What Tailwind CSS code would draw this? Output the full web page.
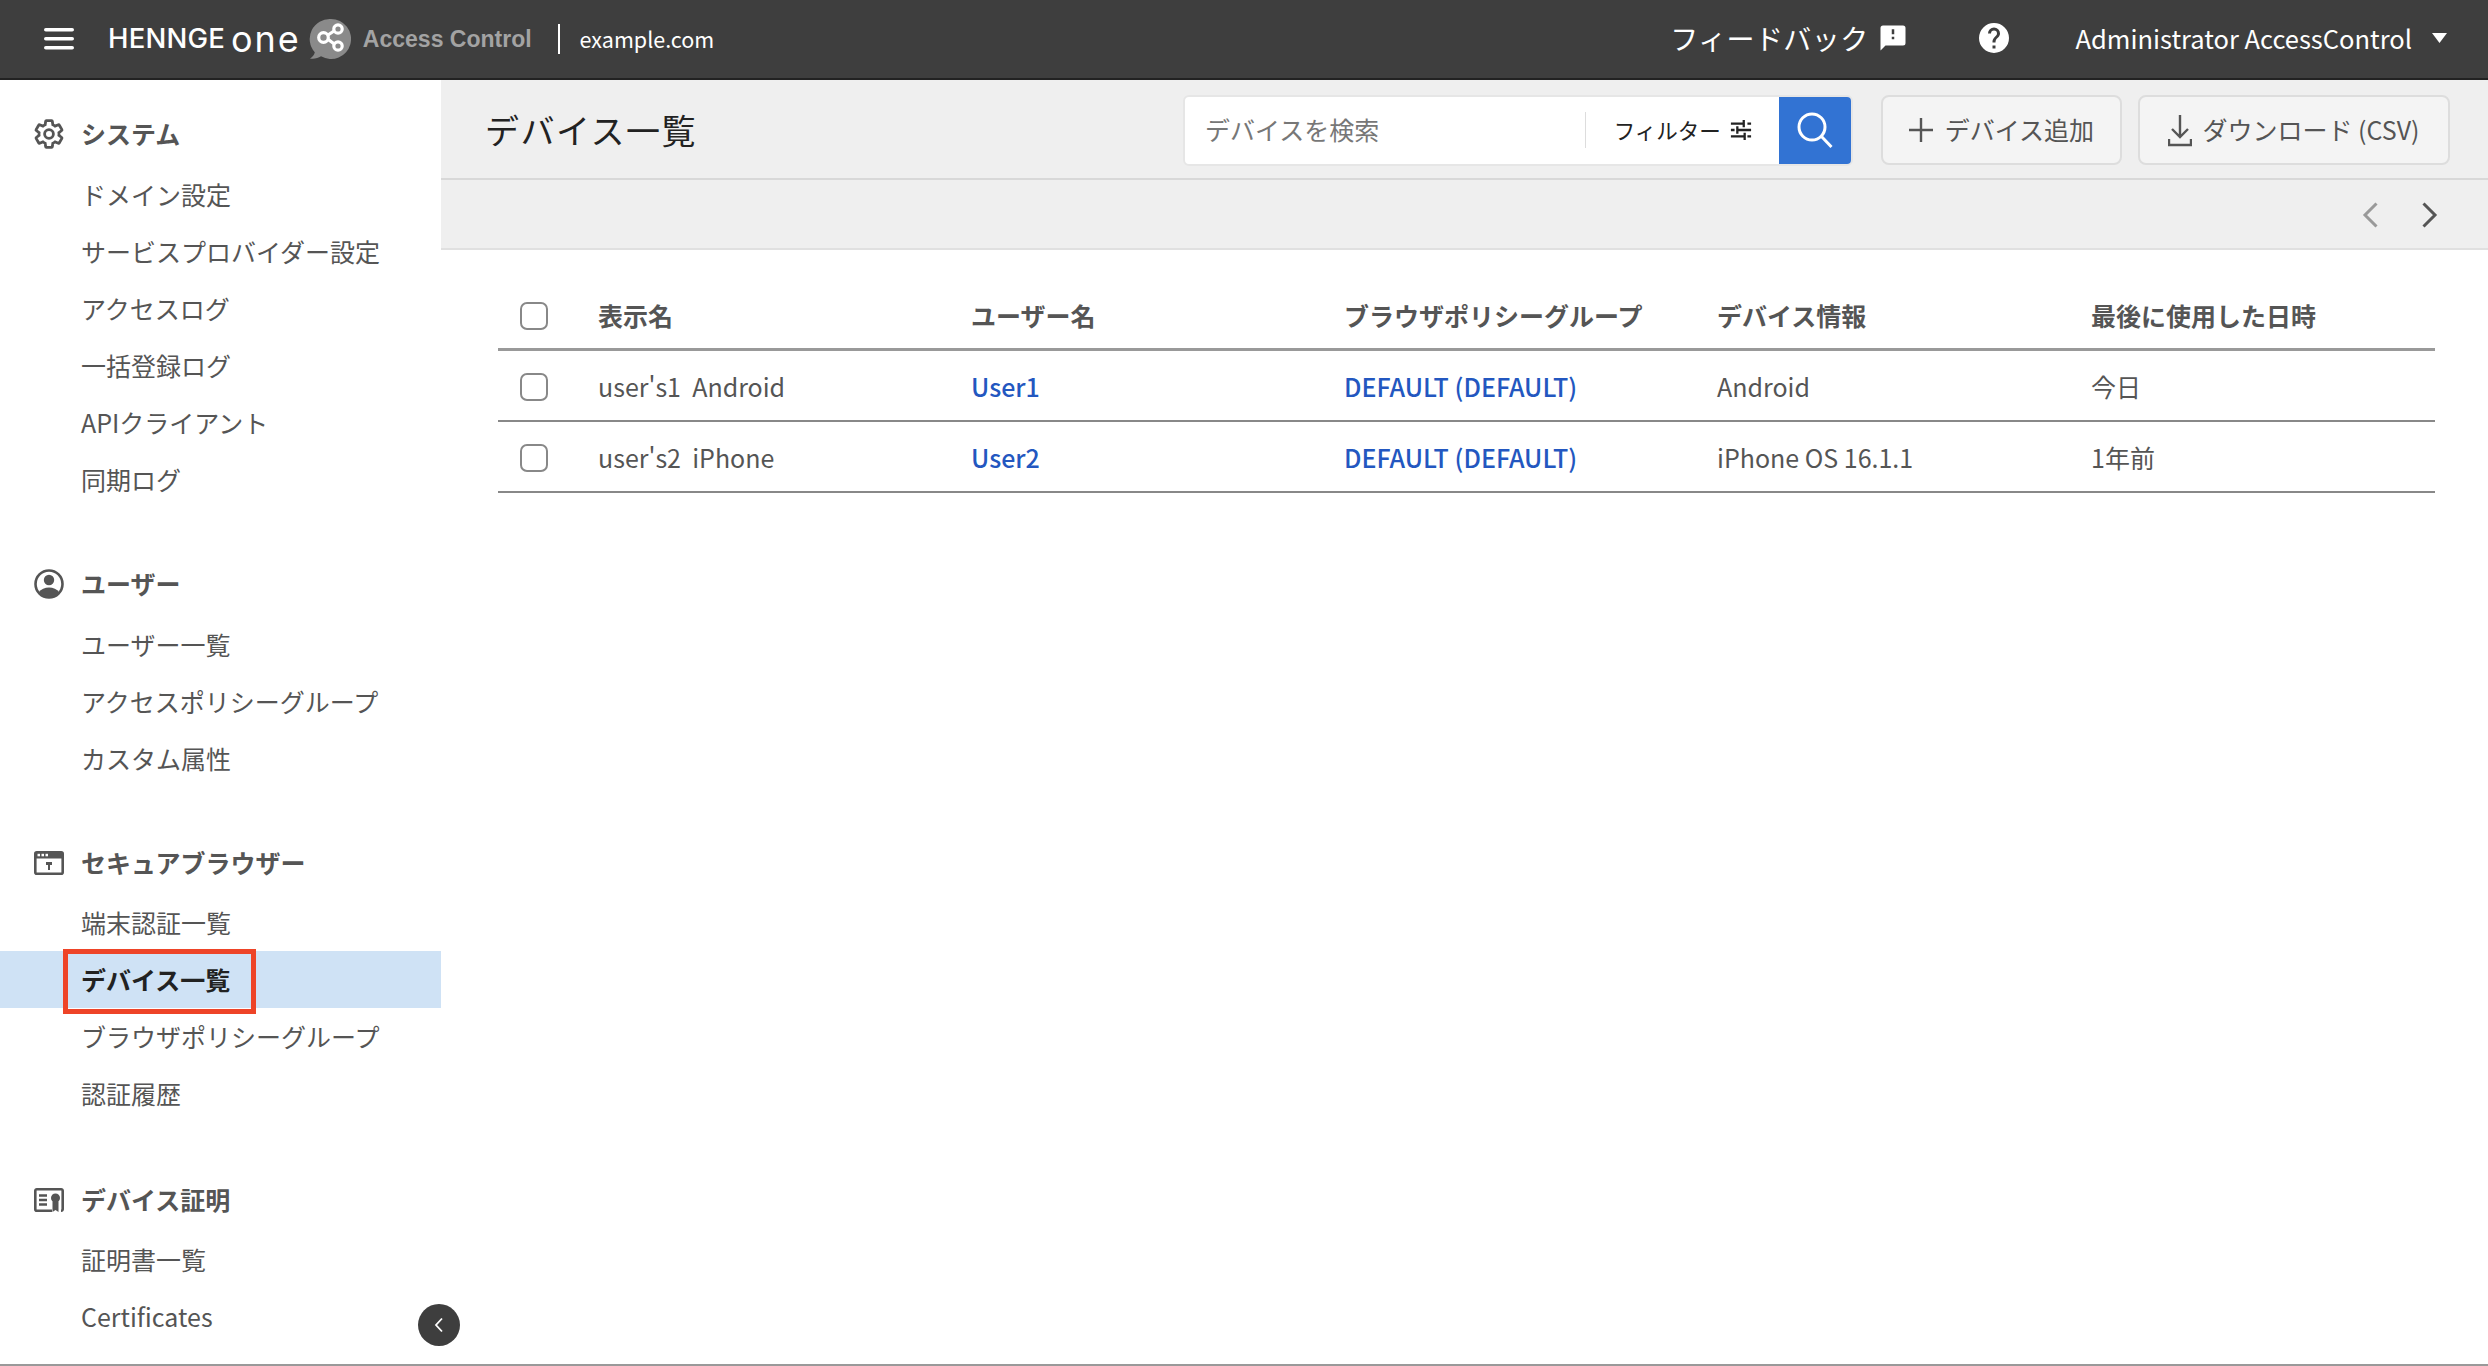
<!DOCTYPE html>
<html lang="ja">
<head>
<meta charset="utf-8">
<title>デバイス一覧</title>
<script src="https://cdn.jsdelivr.net/npm/@tailwindcss/browser@4"></script>
</head>
<body class="m-0 h-screen overflow-hidden bg-white font-['Noto_Sans_CJK_JP','Noto_Sans',sans-serif] text-[#555]">
<div class="flex h-[1366px] flex-col border-b-2 border-[#999]">
  <header class="flex h-[80px] shrink-0 items-center border-b-2 border-[#222] bg-[#3e3e3e] text-white">
    <svg class="ml-[44px] h-[24px] w-[30px]" viewBox="0 0 30 24" fill="#fff"><rect y="1" width="30" height="3.6" rx="1.8"/><rect y="10" width="30" height="3.6" rx="1.8"/><rect y="19" width="30" height="3.6" rx="1.8"/></svg>
    <div class="ml-[34px] flex items-center">
      <span class="font-['Inter',sans-serif] text-[27.5px] font-medium leading-none tracking-[0.2px]">HENNGE</span>
      <span class="ml-[6px] font-['Inter',sans-serif] text-[36px] font-normal leading-none tracking-[2px]">one</span>
      <svg class="ml-[6px] h-[44px] w-[44px]" viewBox="0 0 44 44">
        <path fill="#8a8a8a" d="M24 2a20 20 0 1 1-10 37.3c-3 2-7 2.9-11 2.2 2.600-1.500 4.200-3.500 4.800-6.200A20 20 0 0 1 24 2z"/>
        <g fill="none" stroke="#fff" stroke-width="3.200"><path d="M30 12 18 20l12 9"/><circle cx="31" cy="12" r="4.200" fill="#8a8a8a"/><circle cx="16.500" cy="20.500" r="4.800" fill="#8a8a8a"/><circle cx="31" cy="29" r="4.200" fill="#8a8a8a"/></g>
      </svg>
      <span class="ml-[12px] font-['Liberation_Sans',sans-serif] text-[23px] font-bold leading-none text-[#a3a3a3]">Access Control</span>
      <span class="ml-[26px] h-[30px] w-[2px] bg-white"></span>
      <span class="ml-[20px] text-[21.5px] leading-none">example.com</span>
    </div>
    <div class="ml-auto flex items-center pb-[2px]">
      <span class="text-[28px] leading-none tracking-[0.4px]">フィードバック</span>
      <svg class="ml-[9px] h-[30px] w-[30px]" viewBox="0 0 24 24" fill="#fff"><path d="M20 2H4a2 2 0 0 0-2 2v18l4-4h14a2 2 0 0 0 2-2V4a2 2 0 0 0-2-2zm-7 11h-2v-2h2v2zm0-4h-2V5h2v4z"/></svg>
      <svg class="ml-[68px] h-[36px] w-[36px]" viewBox="0 0 24 24" fill="#fff"><path d="M12 2a10 10 0 1 0 0 20 10 10 0 0 0 0-20zm1 17h-2v-2h2v2zm2.070-7.750-.9.920C13.450 12.900 13 13.500 13 15h-2v-.500c0-1.100.450-2.100 1.170-2.830l1.240-1.260c.370-.360.590-.860.590-1.410a2 2 0 0 0-4 0H8a4 4 0 0 1 8 0c0 .880-.360 1.680-.930 2.250z"/></svg>
      <span class="ml-[64px] text-[25.5px] leading-none">Administrator AccessControl</span>
      <svg class="ml-[20px] mr-[41px] h-[10px] w-[15px]" viewBox="0 0 15 10" fill="#fff"><path d="M0 0h15L7.500 10z"/></svg>
    </div>
  </header>

  <div class="flex min-h-0 flex-1">
    <aside class="relative w-[441px] shrink-0 pt-[22px]">
      <section class="mb-[44px]">
        <h2 class="flex h-[64px] items-center pb-[1px] pl-[33px] text-[25px] font-bold">
          <svg class="mr-[16px] h-[32px] w-[32px]" viewBox="0 0 24 24" fill="none" stroke="#555" stroke-width="2.100"><path d="M19.430 12.980c.04-.32.07-.64.07-.98s-.03-.66-.07-.98l2.110-1.650c.19-.15.24-.42.12-.64l-2-3.460c-.12-.22-.39-.3-.61-.22l-2.490 1c-.52-.4-1.080-.73-1.690-.98l-.38-2.650C14.460 2.180 14.250 2 14 2h-4c-.25 0-.46.18-.49.42l-.38 2.650c-.61.25-1.170.59-1.690.98l-2.490-1c-.23-.09-.49 0-.61.22l-2 3.460c-.13.22-.07.49.12.64l2.110 1.650c-.04.32-.07.65-.07.98s.03.66.07.98l-2.110 1.650c-.19.15-.24.42-.12.64l2 3.460c.12.22.39.3.61.22l2.490-1c.52.4 1.080.73 1.690.98l.38 2.650c.03.24.24.42.49.42h4c.25 0 .46-.18.49-.42l.38-2.650c.61-.25 1.170-.59 1.690-.98l2.490 1c.23.09.49 0 .61-.22l2-3.460c.12-.22.07-.49-.12-.64l-2.110-1.650z"/><circle cx="12" cy="12" r="3.300"/></svg>
          システム</h2>
        <ul class="text-[25px]">
          <li class="flex h-[57px] items-center pl-[81px]">ドメイン設定</li>
          <li class="flex h-[57px] items-center pl-[81px]">サービスプロバイダー設定</li>
          <li class="flex h-[57px] items-center pl-[81px]">アクセスログ</li>
          <li class="flex h-[57px] items-center pl-[81px]">一括登録ログ</li>
          <li class="flex h-[57px] items-center pl-[81px]">APIクライアント</li>
          <li class="flex h-[57px] items-center pl-[81px]">同期ログ</li>
        </ul>
      </section>
      <section class="mb-[44px]">
        <h2 class="flex h-[64px] items-center pb-[1px] pl-[34px] text-[25px] font-bold">
          <svg class="mr-[17px] h-[30px] w-[30px]" viewBox="0 0 30 30"><circle cx="15" cy="15" r="13.500" fill="none" stroke="#555" stroke-width="2.600"/><circle cx="15" cy="11" r="5.200" fill="#555"/><path fill="#555" d="M4.500 23.500C7 20 11 18.500 15 18.500s8 1.500 10.500 5C23 27 19 28.500 15 28.500S7 27 4.500 23.500z"/></svg>
          ユーザー</h2>
        <ul class="text-[25px]">
          <li class="flex h-[57px] items-center pl-[81px]">ユーザー一覧</li>
          <li class="flex h-[57px] items-center pl-[81px]">アクセスポリシーグループ</li>
          <li class="flex h-[57px] items-center pl-[81px]">カスタム属性</li>
        </ul>
      </section>
      <section class="mb-[46px]">
        <h2 class="flex h-[63px] items-center pl-[34px] text-[25px] font-bold">
          <svg class="mr-[17px] h-[24px] w-[30px]" viewBox="0 0 30 24"><rect x="1.300" y="1.300" width="27.400" height="21.400" rx="1.500" fill="none" stroke="#555" stroke-width="2.600"/><rect x="1" y="1" width="28" height="6.500" fill="#555"/><rect x="3.500" y="2.800" width="2.500" height="2.500" fill="#fff"/><rect x="7.500" y="2.800" width="2.500" height="2.500" fill="#fff"/><rect x="11.500" y="2.800" width="2.500" height="2.500" fill="#fff"/><path fill="#555" d="M12 11h6v3h-2v5h-2v-5h-2z"/></svg>
          セキュアブラウザー</h2>
        <ul class="text-[25px]">
          <li class="flex h-[57px] items-center pl-[81px]">端末認証一覧</li>
          <li class="relative flex h-[57px] items-center bg-[#cfe2f5] pl-[81px] font-bold text-[#222]">デバイス一覧
            <span class="absolute left-[63px] top-[-2px] h-[65px] w-[193px] border-[5px] border-[#ee4428]"></span></li>
          <li class="flex h-[57px] items-center pl-[81px]">ブラウザポリシーグループ</li>
          <li class="flex h-[57px] items-center pl-[81px]">認証履歴</li>
        </ul>
      </section>
      <section>
        <h2 class="flex h-[63px] items-center pl-[34px] text-[25px] font-bold">
          <svg class="mr-[17px] h-[24px] w-[30px]" viewBox="0 0 30 24"><path fill="none" stroke="#555" stroke-width="2.600" d="M18 22.700H2.800a1.500 1.500 0 0 1-1.500-1.500V2.800a1.500 1.500 0 0 1 1.500-1.500h24.400a1.500 1.500 0 0 1 1.500 1.500v18.400a1.500 1.500 0 0 1-1.500 1.500H27"/><path stroke="#555" stroke-width="2.300" d="M5 7.500h8M5 12h8M5 16.500h8"/><circle cx="21.500" cy="10" r="4.500" fill="#555"/><path fill="#555" d="M18.500 14h6v10l-3-2-3 2z"/></svg>
          デバイス証明</h2>
        <ul class="text-[25px]">
          <li class="flex h-[57px] items-center pl-[81px]">証明書一覧</li>
          <li class="flex h-[57px] items-center pl-[81px]">Certificates</li>
        </ul>
      </section>
      <button class="absolute bottom-[18px] left-[418px] flex h-[42px] w-[42px] items-center justify-center rounded-full bg-[#3e3e3e]">
        <svg class="h-[16px] w-[10px]" viewBox="0 0 10 16" fill="none" stroke="#fff" stroke-width="1.800"><path d="M8 1.500 2 8l6 6.500"/></svg>
      </button>
    </aside>

    <main class="min-w-0 flex-1">
      <div class="flex h-[100px] items-center border-b-2 border-[#d8d8d8] bg-[#efefef] pl-[44px] pr-[38px] pt-[2px]">
        <h1 class="text-[34px] font-normal leading-none tracking-[1.5px] text-[#222]">デバイス一覧</h1>
        <div class="ml-auto flex h-[71px] w-[670px] overflow-hidden rounded-[6px] border-2 border-[#e6e6e6] bg-white">
          <span class="flex w-[401px] items-center pl-[20px] text-[25px] text-[#777]">デバイスを検索</span>
          <span class="my-auto h-[36px] w-[1px] bg-[#ddd]"></span>
          <span class="flex w-[194px] items-center pl-[28px] text-[21.5px] text-[#222]">フィルター
            <svg class="ml-[9px] h-[22px] w-[22px]" viewBox="0 0 24 24" stroke="#222" stroke-width="2.500" fill="none"><path d="M1 5h14M19 5h4M15 1v8M1 12h4M9 12h14M8 8v8M1 19h14M19 19h4M16 15v8"/></svg>
          </span>
          <span class="ml-auto flex w-[72px] items-center justify-center bg-[#3273d3]">
            <svg class="h-[38px] w-[38px]" viewBox="0 0 38 38" fill="none" stroke="#fff" stroke-width="3"><circle cx="16" cy="16" r="13"/><path d="m25.500 25.500 10 10.500"/></svg>
          </span>
        </div>
        <button class="ml-[28px] flex h-[70px] w-[241px] items-center justify-center rounded-[8px] border-2 border-[#ddd] bg-[#f4f4f4] text-[25px]">
          <svg class="mr-[12px] h-[24px] w-[24px]" viewBox="0 0 24 24" stroke="#555" stroke-width="2.400"><path d="M12 0v24M0 12h24"/></svg>
          デバイス追加</button>
        <button class="ml-[16px] flex h-[70px] w-[312px] items-center justify-center rounded-[8px] border-2 border-[#ddd] bg-[#f4f4f4] text-[25px]">
          <svg class="mr-[10px] h-[36px] w-[24px]" viewBox="0 0 24 36" fill="none" stroke="#555" stroke-width="2.400"><path d="M12 3v21M4 17l8 8 8-8M1 27v6h22v-6"/></svg>
          ダウンロード (CSV)</button>
      </div>
      <div class="flex h-[70px] items-center justify-end border-b-2 border-[#e0e0e0] bg-[#efefef] pr-[50px] pt-[2px]">
        <svg class="h-[26px] w-[16px]" viewBox="0 0 16 26" fill="none" stroke="#999" stroke-width="3"><path d="M14.500 1.500 3 13l11.500 11.500"/></svg>
        <svg class="ml-[44px] h-[26px] w-[16px]" viewBox="0 0 16 26" fill="none" stroke="#555" stroke-width="3"><path d="m1.500 1.500 11.500 11.500-11.500 11.500"/></svg>
      </div>
      <div class="ml-[57px] mr-[53px] mt-[31px] text-[25px]">
        <div class="grid h-[70px] grid-cols-[100px_373px_373px_373px_374px_1fr] items-center border-b-[3px] border-[#999] pt-[2px] font-bold">
          <span class="ml-[22px] h-[28px] w-[28px] rounded-[7px] border-2 border-[#888]"></span>
          <span>表示名</span><span>ユーザー名</span><span>ブラウザポリシーグループ</span><span>デバイス情報</span><span>最後に使用した日時</span>
        </div>
        <div class="grid h-[71px] grid-cols-[100px_373px_373px_373px_374px_1fr] items-center border-b-2 border-[#888] pt-[2px]">
          <span class="ml-[22px] h-[28px] w-[28px] rounded-[7px] border-2 border-[#888]"></span>
          <span class="whitespace-pre">user's1  Android</span><a class="font-medium text-[#2357c0]">User1</a><a class="font-medium text-[#2357c0]">DEFAULT (DEFAULT)</a><span>Android</span><span>今日</span>
        </div>
        <div class="grid h-[71px] grid-cols-[100px_373px_373px_373px_374px_1fr] items-center border-b-2 border-[#888] pt-[2px]">
          <span class="ml-[22px] h-[28px] w-[28px] rounded-[7px] border-2 border-[#888]"></span>
          <span class="whitespace-pre">user's2  iPhone</span><a class="font-medium text-[#2357c0]">User2</a><a class="font-medium text-[#2357c0]">DEFAULT (DEFAULT)</a><span>iPhone OS 16.1.1</span><span>1年前</span>
        </div>
      </div>
    </main>
  </div>
</div>
</body>
</html>
